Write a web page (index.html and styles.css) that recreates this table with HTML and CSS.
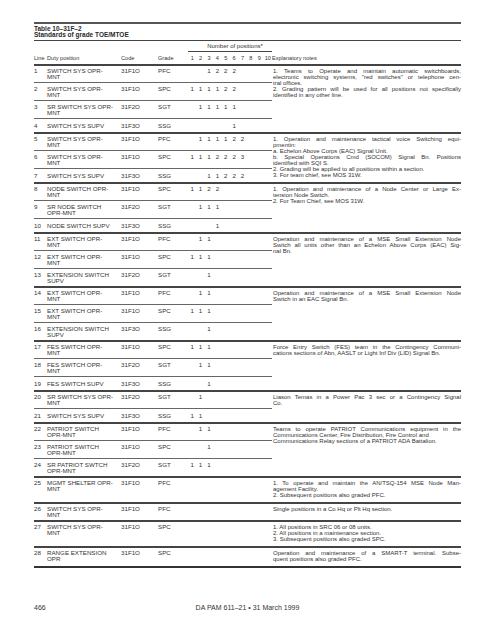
FILE: index.html
```html
<!DOCTYPE html>
<html>
<head>
<meta charset="utf-8">
<link rel="stylesheet" href="styles.css">
</head>
<body>
<div class="page">
  <div class="caption">Table 10–31F–2<br>Standards of grade TOE/MTOE</div>
  <table>
    <colgroup>
      <col class="w-line"><col class="w-duty"><col class="w-code"><col class="w-grade">
      <col class="w-n"><col class="w-n"><col class="w-n"><col class="w-n"><col class="w-n">
      <col class="w-n"><col class="w-n"><col class="w-n"><col class="w-n"><col class="w-n">
      <col class="w-note">
    </colgroup>
    <thead>
      <tr class="h1"><th colspan="4"></th><th colspan="10" class="np">Number of positions*</th><th></th></tr>
      <tr class="h2"><th>Line</th><th>Duty position</th><th>Code</th><th>Grade</th><th class="c">1</th><th class="c">2</th><th class="c">3</th><th class="c">4</th><th class="c">5</th><th class="c">6</th><th class="c">7</th><th class="c">8</th><th class="c">9</th><th class="c">10</th><th class="xn">Explanatory notes</th></tr>
    </thead>
    <tbody>
      <tr><td>1</td><td>SWITCH SYS OPR-<br>MNT</td><td>31F1O</td><td>PFC</td><td></td><td></td><td class="c">1</td><td class="c">2</td><td class="c">2</td><td class="c">2</td><td></td><td></td><td></td><td></td>
        <td class="note" rowspan="4"><span class="j">1. Teams to Operate and maintain automatic switchboards,</span><span class="j">electronic switching systems, "red switches" or telephone cen-</span><span>tral offices.</span><span class="j">2. Grading pattern will be used for all positions not specifically</span><span>identified in any other line.</span></td></tr>
      <tr><td>2</td><td>SWITCH SYS OPR-<br>MNT</td><td>31F1O</td><td>SPC</td><td class="c">1</td><td class="c">1</td><td class="c">1</td><td class="c">1</td><td class="c">2</td><td class="c">2</td><td></td><td></td><td></td><td></td></tr>
      <tr><td>3</td><td>SR SWITCH SYS OPR-<br>MNT</td><td>31F2O</td><td>SGT</td><td></td><td class="c">1</td><td class="c">1</td><td class="c">1</td><td class="c">1</td><td class="c">1</td><td></td><td></td><td></td><td></td></tr>
      <tr class="s"><td>4</td><td>SWITCH SYS SUPV</td><td>31F3O</td><td>SSG</td><td></td><td></td><td></td><td></td><td></td><td class="c">1</td><td></td><td></td><td></td><td></td></tr>
    </tbody>
    <tbody>
      <tr><td>5</td><td>SWITCH SYS OPR-<br>MNT</td><td>31F1O</td><td>PFC</td><td></td><td class="c">1</td><td class="c">1</td><td class="c">1</td><td class="c">1</td><td class="c">2</td><td class="c">2</td><td></td><td></td><td></td>
        <td class="note" rowspan="3"><span class="j">1. Operation and maintenance tactical voice Switching equi-</span><span>pmentin:</span><span>a. Echelon Above Corps (EAC) Signal Unit.</span><span class="j">b. Special Operations Cmd (SOCOM) Signal Bn. Positions</span><span>identified with SQI S.</span><span>2. Grading will be applied to all positions within a section.</span><span>3. For team chief, see MOS 31W.</span></td></tr>
      <tr><td>6</td><td>SWITCH SYS OPR-<br>MNT</td><td>31F1O</td><td>SPC</td><td class="c">1</td><td class="c">1</td><td class="c">1</td><td class="c">2</td><td class="c">2</td><td class="c">2</td><td class="c">3</td><td></td><td></td><td></td></tr>
      <tr class="s"><td>7</td><td>SWITCH SYS SUPV</td><td>31F3O</td><td>SSG</td><td></td><td></td><td class="c">1</td><td class="c">1</td><td class="c">2</td><td class="c">2</td><td class="c">2</td><td></td><td></td><td></td></tr>
    </tbody>
    <tbody>
      <tr><td>8</td><td>NODE SWITCH OPR-<br>MNT</td><td>31F1O</td><td>SPC</td><td class="c">1</td><td class="c">1</td><td class="c">2</td><td class="c">2</td><td></td><td></td><td></td><td></td><td></td><td></td>
        <td class="note" rowspan="3"><span class="j">1. Operation and maintenance of a Node Center or Large Ex-</span><span>tension Node Switch.</span><span>2. For Team Chief, see MOS 31W.</span></td></tr>
      <tr><td>9</td><td>SR NODE SWITCH<br>OPR-MNT</td><td>31F2O</td><td>SGT</td><td></td><td class="c">1</td><td class="c">1</td><td class="c">1</td><td></td><td></td><td></td><td></td><td></td><td></td></tr>
      <tr class="s"><td>10</td><td>NODE SWITCH SUPV</td><td>31F3O</td><td>SSG</td><td></td><td></td><td></td><td class="c">1</td><td></td><td></td><td></td><td></td><td></td><td></td></tr>
    </tbody>
    <tbody>
      <tr><td>11</td><td>EXT SWITCH OPR-<br>MNT</td><td>31F1O</td><td>PFC</td><td></td><td class="c">1</td><td class="c">1</td><td></td><td></td><td></td><td></td><td></td><td></td><td></td>
        <td class="note" rowspan="3"><span class="j">Operation and maintenance of a MSE Small Extension Node</span><span class="j">Switch all units other than an Echelon Above Corps (EAC) Sig-</span><span>nal Bn.</span></td></tr>
      <tr><td>12</td><td>EXT SWITCH OPR-<br>MNT</td><td>31F1O</td><td>SPC</td><td class="c">1</td><td class="c">1</td><td class="c">1</td><td></td><td></td><td></td><td></td><td></td><td></td><td></td></tr>
      <tr><td>13</td><td>EXTENSION SWITCH<br>SUPV</td><td>31F2O</td><td>SGT</td><td></td><td></td><td class="c">1</td><td></td><td></td><td></td><td></td><td></td><td></td><td></td></tr>
    </tbody>
    <tbody>
      <tr><td>14</td><td>EXT SWITCH OPR-<br>MNT</td><td>31F1O</td><td>PFC</td><td></td><td class="c">1</td><td class="c">1</td><td></td><td></td><td></td><td></td><td></td><td></td><td></td>
        <td class="note" rowspan="3"><span class="j">Operation and maintenance of a MSE Small Extension Node</span><span>Switch in an EAC Signal Bn.</span></td></tr>
      <tr><td>15</td><td>EXT SWITCH OPR-<br>MNT</td><td>31F1O</td><td>SPC</td><td class="c">1</td><td class="c">1</td><td class="c">1</td><td></td><td></td><td></td><td></td><td></td><td></td><td></td></tr>
      <tr><td>16</td><td>EXTENSION SWITCH<br>SUPV</td><td>31F3O</td><td>SSG</td><td></td><td></td><td class="c">1</td><td></td><td></td><td></td><td></td><td></td><td></td><td></td></tr>
    </tbody>
    <tbody>
      <tr><td>17</td><td>FES SWITCH OPR-<br>MNT</td><td>31F1O</td><td>SPC</td><td class="c">1</td><td class="c">1</td><td class="c">1</td><td></td><td></td><td></td><td></td><td></td><td></td><td></td>
        <td class="note" rowspan="3"><span class="j">Force Entry Switch (FES) team in the Contingency Communi-</span><span>cations sections of Abn, AASLT or Light Inf Div (LID) Signal Bn.</span></td></tr>
      <tr><td>18</td><td>FES SWITCH OPR-<br>MNT</td><td>31F2O</td><td>SGT</td><td></td><td class="c">1</td><td class="c">1</td><td></td><td></td><td></td><td></td><td></td><td></td><td></td></tr>
      <tr class="s"><td>19</td><td>FES SWITCH SUPV</td><td>31F3O</td><td>SSG</td><td></td><td></td><td class="c">1</td><td></td><td></td><td></td><td></td><td></td><td></td><td></td></tr>
    </tbody>
    <tbody>
      <tr><td>20</td><td>SR SWITCH SYS OPR-<br>MNT</td><td>31F2O</td><td>SGT</td><td></td><td class="c">1</td><td></td><td></td><td></td><td></td><td></td><td></td><td></td><td></td>
        <td class="note" rowspan="2"><span class="j">Liason Temas in a Power Pac 3 sec or a Contingency Signal</span><span>Co.</span></td></tr>
      <tr class="s"><td>21</td><td>SWITCH SYS SUPV</td><td>31F3O</td><td>SSG</td><td class="c">1</td><td class="c">1</td><td></td><td></td><td></td><td></td><td></td><td></td><td></td><td></td></tr>
    </tbody>
    <tbody>
      <tr><td>22</td><td>PATRIOT SWITCH<br>OPR-MNT</td><td>31F1O</td><td>PFC</td><td></td><td class="c">1</td><td class="c">1</td><td></td><td></td><td></td><td></td><td></td><td></td><td></td>
        <td class="note" rowspan="3"><span class="j">Teams to operate PATRIOT Communications equipment in the</span><span>Communications Center, Fire Distribution, Fire Control and</span><span>Communications Relay sections of a PATRIOT ADA Battalion.</span></td></tr>
      <tr><td>23</td><td>PATRIOT SWITCH<br>OPR-MNT</td><td>31F1O</td><td>SPC</td><td></td><td></td><td class="c">1</td><td></td><td></td><td></td><td></td><td></td><td></td><td></td></tr>
      <tr><td>24</td><td>SR PATRIOT SWTCH<br>OPR-MNT</td><td>31F2O</td><td>SGT</td><td class="c">1</td><td class="c">1</td><td class="c">1</td><td></td><td></td><td></td><td></td><td></td><td></td><td></td></tr>
    </tbody>
    <tbody>
      <tr><td>25</td><td>MGMT SHELTER OPR-<br>MNT</td><td>31F1O</td><td>PFC</td><td></td><td></td><td></td><td></td><td></td><td></td><td></td><td></td><td></td><td></td>
        <td class="note"><span class="j">1. To operate and maintain the AN/TSQ-154 MSE Node Man-</span><span>agement Facility.</span><span>2. Subsequent positions also graded PFC.</span></td></tr>
    </tbody>
    <tbody>
      <tr><td>26</td><td>SWITCH SYS OPR-<br>MNT</td><td>31F1O</td><td>PFC</td><td></td><td></td><td></td><td></td><td></td><td></td><td></td><td></td><td></td><td></td>
        <td class="note"><span>Single positions in a Co Hq or Plt Hq section.</span></td></tr>
    </tbody>
    <tbody>
      <tr><td>27</td><td>SWITCH SYS OPR-<br>MNT</td><td>31F1O</td><td>SPC</td><td></td><td></td><td></td><td></td><td></td><td></td><td></td><td></td><td></td><td></td>
        <td class="note"><span>1. All positions in SRC 06 or 08 units.</span><span>2. All positions in a maintenance section.</span><span>3. Subsequent positions also graded SPC.</span></td></tr>
    </tbody>
    <tbody class="last">
      <tr><td>28</td><td>RANGE EXTENSION<br>OPR</td><td>31F1O</td><td>SPC</td><td></td><td></td><td></td><td></td><td></td><td></td><td></td><td></td><td></td><td></td>
        <td class="note"><span class="j">Operation and maintenance of a SMART-T terminal. Subse-</span><span>quent positions also graded PFC.</span></td></tr>
    </tbody>
  </table>
  <div class="footer"><span class="pg">466</span><span class="pub">DA PAM 611–21 • 31 March 1999</span><span></span></div>
</div>
</body>
</html>
```

FILE: styles.css
```css
html, body {
  margin: 0;
  background: #ffffff;
}
body {
  color: #333333;
  font-family: "Liberation Sans", Arial, sans-serif;
}
.page {
  width: 427px;
  margin-left: 34px;
  padding-top: 22px;
}
.caption {
  border-top: 2px solid #555555;
  border-bottom: 1px solid #444444;
  padding: 1.5px 0;
  font-weight: bold;
  font-size: 6.5px;
  line-height: 6.5px;
  color: #2a2a2a;
}
table {
  width: 427px;
  border-spacing: 0;
  table-layout: fixed;
  font-size: 6.2px;
  line-height: 6px;
}
.w-line { width: 13px; }
.w-duty { width: 74px; }
.w-code { width: 37px; }
.w-grade { width: 30px; }
.w-n { width: 8.4px; }
.w-note { width: 189px; }

th, td {
  padding: 2.5px 0;
  vertical-align: top;
  text-align: left;
  font-weight: normal;
  white-space: nowrap;
}
thead th {
  font-size: 5.6px;
  line-height: 6px;
}
.h1 th {
  padding: 2px 0;
}
.h1 .np {
  border-bottom: 1px solid #444444;
  text-align: center;
  font-size: 6px;
  padding-left: 10px;
}
.h2 th {
  padding: 3px 0;
}
.c {
  text-align: center;
}
th.c {
  text-align: center;
}
.xn {
  padding-left: 1px;
}
tbody tr:first-child td {
  border-top: 2px solid #444444;
  padding-top: 1.5px;
}
tbody tr + tr td {
  border-top: 1px solid #666666;
}
tr.s td {
  padding-top: 3.5px;
  padding-bottom: 3.5px;
}
td.note {
  padding-left: 1px;
  padding-bottom: 4.5px;
  font-size: 6px;
  line-height: 6px;
  white-space: normal;
}
.note span {
  display: block;
  white-space: nowrap;
}
.note .j {
  text-align: justify;
  text-align-last: justify;
  white-space: normal;
}
tbody.last td {
  border-bottom: 2px solid #333333;
}
.footer {
  margin-top: 36px;
  display: grid;
  grid-template-columns: 1fr auto 1fr;
  font-size: 7px;
  line-height: 8px;
}
```
